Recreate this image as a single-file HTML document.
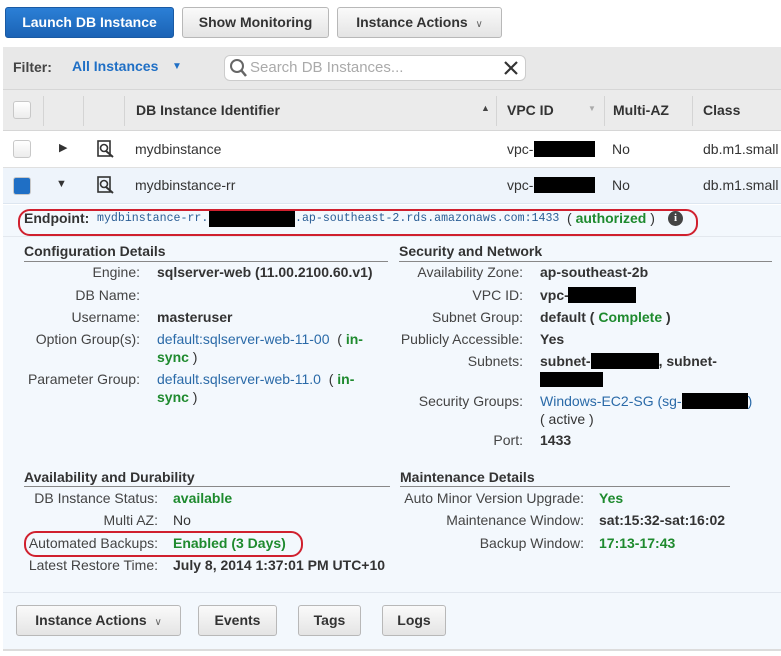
<!DOCTYPE html>
<html><head><meta charset="utf-8"><style>
*{box-sizing:border-box;margin:0;padding:0}
body{width:781px;height:656px;background:#fff;font-family:"Liberation Sans",Arial,sans-serif;font-size:14px;color:#333;position:relative;overflow:hidden}
.a{position:absolute;white-space:nowrap}
.btn{position:absolute;height:31px;border:1px solid #b8b8b8;border-radius:3px;background:linear-gradient(#fafafa,#e4e4e4);font-weight:bold;font-size:14px;color:#333;text-align:center;line-height:29px}
.blk{position:absolute;background:#000}
.lbl{position:absolute;text-align:right;white-space:nowrap;color:#444}
.val{position:absolute;white-space:nowrap;font-weight:bold;color:#333}
.g{color:#1e8a2e;font-weight:bold}
.lnk{color:#2a6aa8;font-weight:normal}
.hd{position:absolute;font-weight:bold;color:#333}
.hl{position:absolute;height:1px;background:#888}
.vs{position:absolute;top:96px;width:1px;height:30px;background:#d4d4d4}
.cb{position:absolute;width:18px;height:18px;border:1px solid #c8c8c8;border-radius:3px;background:linear-gradient(#fff,#ececec)}
.chev{font-size:10px;color:#666;font-weight:normal}
</style></head><body>
<div class="btn" style="left:5px;top:7px;width:169px;background:linear-gradient(#2b7fd6,#1b63b5);border-color:#1a5aa3;color:#fff">Launch DB Instance</div>
<div class="btn" style="left:182px;top:7px;width:147px">Show Monitoring</div>
<div class="btn" style="left:337px;top:7px;width:165px">Instance Actions &nbsp;<span class="chev">&#8744;</span></div>

<div class="a" style="left:3px;top:47px;width:778px;height:43px;background:#e8e8e8;border-bottom:1px solid #d6d6d6"></div>
<div class="a" style="left:13px;top:59px;font-weight:bold;color:#444">Filter:</div>
<div class="a" style="left:72px;top:58px;font-weight:bold;color:#1f6fc5">All Instances</div>
<div class="a" style="left:172px;top:61px;font-size:10px;color:#1f6fc5">&#9660;</div>
<div class="a" style="left:224px;top:55px;width:302px;height:26px;background:#fff;border:1px solid #ccc;border-radius:6px"></div>
<svg class="a" style="left:229px;top:58px" width="20" height="20"><circle cx="8" cy="8" r="6" fill="none" stroke="#666" stroke-width="2"/><line x1="12" y1="12" x2="17" y2="18" stroke="#666" stroke-width="2.5"/></svg>
<div class="a" style="left:250px;top:59px;color:#aaa;font-size:15px">Search DB Instances...</div>
<svg class="a" style="left:503px;top:60px" width="16" height="16"><path d="M2 2L14 14M14 2L2 14" stroke="#333" stroke-width="2.2"/></svg>

<div class="a" style="left:3px;top:90px;width:778px;height:41px;background:#ebebeb;border-bottom:1px solid #d6d6d6"></div>
<div class="cb" style="left:13px;top:101px"></div>
<div class="vs" style="left:43px"></div><div class="vs" style="left:83px"></div><div class="vs" style="left:124px"></div><div class="vs" style="left:496px"></div><div class="vs" style="left:604px"></div><div class="vs" style="left:692px"></div>
<div class="a" style="left:136px;top:102px;font-weight:bold">DB Instance Identifier</div>
<div class="a" style="left:481px;top:103px;font-size:9px;color:#444">&#9650;</div>
<div class="a" style="left:507px;top:102px;font-weight:bold">VPC ID</div>
<div class="a" style="left:588px;top:104px;font-size:8px;color:#aaa">&#9660;</div>
<div class="a" style="left:613px;top:102px;font-weight:bold">Multi-AZ</div>
<div class="a" style="left:703px;top:102px;font-weight:bold">Class</div>

<div class="a" style="left:3px;top:167px;width:778px;height:1px;background:#e0e0e0"></div>
<div class="cb" style="left:13px;top:140px"></div>
<div class="a" style="left:59px;top:141px;font-size:11px">&#9654;</div>
<svg class="a" style="left:96px;top:140px" width="20" height="18"><rect x="2" y="1" width="12" height="15" fill="none" stroke="#333" stroke-width="1.6"/><circle cx="8" cy="8" r="3.5" fill="none" stroke="#333" stroke-width="1.6"/><line x1="10" y1="11" x2="17" y2="17" stroke="#333" stroke-width="2"/></svg>
<div class="a" style="left:135px;top:141px">mydbinstance</div>
<div class="a" style="left:507px;top:141px">vpc-</div><div class="blk" style="left:534px;top:141px;width:61px;height:16px"></div>
<div class="a" style="left:612px;top:141px">No</div>
<div class="a" style="left:703px;top:141px">db.m1.small</div>

<div class="a" style="left:3px;top:168px;width:778px;height:36px;background:#eef4fb;border-bottom:1px solid #dde6f0"></div>
<div class="a" style="left:13px;top:177px;width:18px;height:18px;border-radius:3px;background:#1f6fc5;border:1px solid #c8c8c8"></div>
<div class="a" style="left:56px;top:178px;font-size:11px">&#9660;</div>
<svg class="a" style="left:96px;top:176px" width="20" height="18"><rect x="2" y="1" width="12" height="15" fill="none" stroke="#333" stroke-width="1.6"/><circle cx="8" cy="8" r="3.5" fill="none" stroke="#333" stroke-width="1.6"/><line x1="10" y1="11" x2="17" y2="17" stroke="#333" stroke-width="2"/></svg>
<div class="a" style="left:135px;top:177px">mydbinstance-rr</div>
<div class="a" style="left:507px;top:177px">vpc-</div><div class="blk" style="left:534px;top:177px;width:61px;height:16px"></div>
<div class="a" style="left:612px;top:177px">No</div>
<div class="a" style="left:703px;top:177px">db.m1.small</div>

<div class="a" style="left:3px;top:205px;width:778px;height:446px;background:#f3f8fd;border-bottom:2px solid #dcdcdc"></div>
<div class="a" style="left:3px;top:236px;width:778px;height:1px;background:#e3e8ee"></div>
<div class="a" style="left:24px;top:210px;font-weight:bold;color:#333">Endpoint:</div>
<div class="a" style="left:97px;top:212px;font-family:'Liberation Mono',monospace;font-size:11.6px;color:#2a5d95">mydbinstance-rr.</div>
<div class="blk" style="left:209px;top:210px;width:86px;height:17px"></div>
<div class="a" style="left:295px;top:212px;font-family:'Liberation Mono',monospace;font-size:11.6px;color:#2a5d95">.ap-southeast-2.rds.amazonaws.com:1433</div>
<div class="a" style="left:567px;top:210px">( <span class="g">authorized</span> )</div>
<div class="a" style="left:668px;top:211px;width:15px;height:15px;border-radius:50%;background:#444;color:#fff;font-size:11px;font-weight:bold;text-align:center;line-height:15px;font-family:'Liberation Serif',serif">i</div>
<div class="a" style="left:18px;top:209px;width:680px;height:27px;border:2px solid #d0202e;border-radius:12px"></div>

<div class="hd" style="left:24px;top:243px">Configuration Details</div>
<div class="hl" style="left:24px;top:261px;width:364px"></div>
<div class="hd" style="left:399px;top:243px">Security and Network</div>
<div class="hl" style="left:399px;top:261px;width:373px"></div>

<div class="lbl" style="right:641px;top:264px">Engine:</div><div class="val" style="left:157px;top:264px">sqlserver-web (11.00.2100.60.v1)</div>
<div class="lbl" style="right:641px;top:287px">DB Name:</div>
<div class="lbl" style="right:641px;top:309px">Username:</div><div class="val" style="left:157px;top:309px">masteruser</div>
<div class="lbl" style="right:641px;top:331px">Option Group(s):</div><div class="val" style="left:157px;top:331px;font-weight:normal"><span class="lnk">default:sqlserver-web-11-00</span> &nbsp;( <span class="g">in-</span></div>
<div class="val" style="left:157px;top:349px;font-weight:normal"><span class="g">sync</span> )</div>
<div class="lbl" style="right:641px;top:371px">Parameter Group:</div><div class="val" style="left:157px;top:371px;font-weight:normal"><span class="lnk">default.sqlserver-web-11.0</span> &nbsp;( <span class="g">in-</span></div>
<div class="val" style="left:157px;top:389px;font-weight:normal"><span class="g">sync</span> )</div>

<div class="lbl" style="right:258px;top:264px">Availability Zone:</div><div class="val" style="left:540px;top:264px">ap-southeast-2b</div>
<div class="lbl" style="right:258px;top:287px">VPC ID:</div><div class="val" style="left:540px;top:287px">vpc-</div><div class="blk" style="left:568px;top:287px;width:68px;height:16px"></div>
<div class="lbl" style="right:258px;top:309px">Subnet Group:</div><div class="val" style="left:540px;top:309px">default ( <span class="g">Complete</span> )</div>
<div class="lbl" style="right:258px;top:331px">Publicly Accessible:</div><div class="val" style="left:540px;top:331px">Yes</div>
<div class="lbl" style="right:258px;top:353px">Subnets:</div><div class="val" style="left:540px;top:353px">subnet-<span style="display:inline-block;width:68px;height:16px;background:#000;vertical-align:-3px"></span>, subnet-</div>
<div class="blk" style="left:540px;top:372px;width:63px;height:15px"></div>
<div class="lbl" style="right:258px;top:393px">Security Groups:</div><div class="val lnk" style="left:540px;top:393px">Windows-EC2-SG (sg-<span style="display:inline-block;width:66px;height:16px;background:#000;vertical-align:-3px"></span>)</div>
<div class="val" style="left:540px;top:411px;font-weight:normal">( active )</div>
<div class="lbl" style="right:258px;top:432px">Port:</div><div class="val" style="left:540px;top:432px">1433</div>

<div class="hd" style="left:24px;top:469px">Availability and Durability</div>
<div class="hl" style="left:24px;top:486px;width:366px"></div>
<div class="hd" style="left:400px;top:469px">Maintenance Details</div>
<div class="hl" style="left:400px;top:486px;width:330px"></div>

<div class="lbl" style="right:623px;top:490px">DB Instance Status:</div><div class="val g" style="left:173px;top:490px">available</div>
<div class="lbl" style="right:623px;top:512px">Multi AZ:</div><div class="val" style="left:173px;top:512px;font-weight:normal">No</div>
<div class="lbl" style="right:623px;top:535px">Automated Backups:</div><div class="val g" style="left:173px;top:535px">Enabled (3 Days)</div>
<div class="lbl" style="right:623px;top:557px">Latest Restore Time:</div><div class="val" style="left:173px;top:557px">July 8, 2014 1:37:01 PM UTC+10</div>
<div class="a" style="left:24px;top:531px;width:279px;height:26px;border:2px solid #d0202e;border-radius:12px"></div>

<div class="lbl" style="right:197px;top:490px">Auto Minor Version Upgrade:</div><div class="val g" style="left:599px;top:490px">Yes</div>
<div class="lbl" style="right:197px;top:512px">Maintenance Window:</div><div class="val" style="left:599px;top:512px">sat:15:32-sat:16:02</div>
<div class="lbl" style="right:197px;top:535px">Backup Window:</div><div class="val g" style="left:599px;top:535px">17:13-17:43</div>

<div class="a" style="left:3px;top:592px;width:778px;height:1px;background:#e0e6ee"></div>
<div class="btn" style="left:16px;top:605px;width:165px">Instance Actions &nbsp;<span class="chev">&#8744;</span></div>
<div class="btn" style="left:198px;top:605px;width:79px">Events</div>
<div class="btn" style="left:298px;top:605px;width:63px">Tags</div>
<div class="btn" style="left:382px;top:605px;width:64px">Logs</div>
</body></html>
